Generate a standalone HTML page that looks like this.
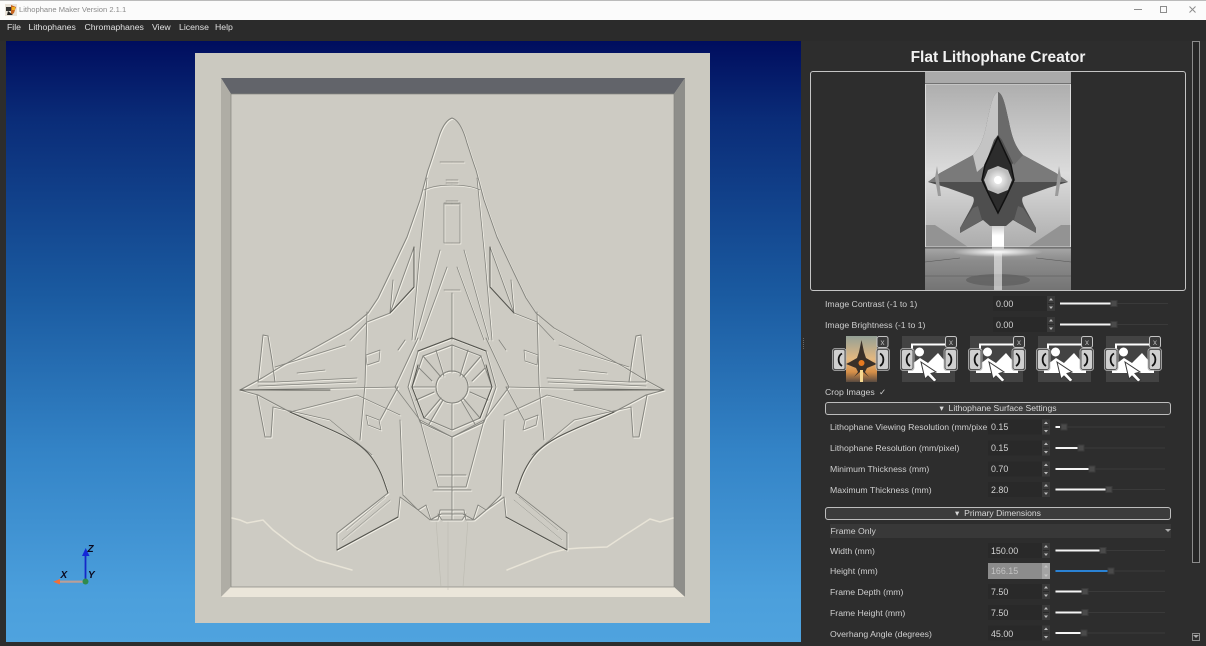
<!DOCTYPE html>
<html><head><meta charset="utf-8">
<style>
html,body{margin:0;padding:0;background:#2d2d2d}
#w{position:relative;width:1206px;height:646px;overflow:hidden;background:#2d2d2d;font-family:"Liberation Sans",sans-serif;color:#d8d8d8}
#w div,#w span{position:absolute;white-space:nowrap}
.m{top:21px;font-size:8.7px;line-height:13px;color:#e0e0e0}
.l{font-size:8.7px;line-height:12px;color:#cfcfcf}
.v{font-size:8.9px;line-height:12px;color:#d4d4d4}
.b{left:825px;width:344px;height:11px;border:1px solid #bdbdbd;border-radius:3px;background:#3c3c3c;font-size:8.6px;line-height:11px;text-align:center;color:#d8d8d8}
</style></head><body>
<div id="w">
<div style="left:0;top:0;width:1206px;height:19.500px;background:#fbfbfb;border-top:1px solid #bbb;box-sizing:border-box"></div>
<div style="left:19px;top:3.500px;font-size:7.6px;line-height:12px;color:#8a8a8a">Lithophane Maker Version 2.1.1</div>
<svg style="position:absolute;left:5px;top:4px" width="12" height="12" viewBox="0 0 12 12"><rect width="12" height="12" fill="#e8e2d8"/><path d="M1 3h5v4H1z" fill="#333"/><path d="M6 1l5 2-2 6-3 2z" fill="#c8641e"/><path d="M3 7l5 4H2z" fill="#222"/><path d="M7 3h3v3H7z" fill="#eeb020"/></svg>
<svg style="position:absolute;left:1125px;top:0" width="81" height="19" viewBox="0 0 81 19" fill="none" stroke="#8c8c8c"><path d="M9 9.500h8"/><rect x="35.500" y="6.500" width="6" height="6"/><path d="M64.500 6.500l6 6M70.500 6.500l-6 6"/></svg>
<div style="left:0;top:19.500px;width:1206px;height:21px;background:#2b2b2b"></div>
<span class="m" style="left:7px">File</span>
<span class="m" style="left:28.500px">Lithophanes</span>
<span class="m" style="left:84.500px">Chromaphanes</span>
<span class="m" style="left:152px">View</span>
<span class="m" style="left:179px">License</span>
<span class="m" style="left:215px">Help</span>

<div style="left:6px;top:41px;width:795px;height:601px;background:linear-gradient(180deg,#000d5e 0%,#0a2c78 13%,#1a5aa0 42%,#3383c6 68%,#4b9fdc 92%,#4fa3de 100%)"></div>

<svg style="position:absolute;left:0;top:0" width="802" height="646" viewBox="0 0 802 646">
<defs>
<g id="ship" fill="none" stroke-linejoin="round" stroke-linecap="round">
<path d="M452 118C446 120 441 128 437 143C433 155 431 162 428 170L420 200L407 237L390 273L378 298L368 313L350 328L280 367L262 378L240 390L258 395L290 412C330 430 358 438 372 458C382 472 384 482 388 493L337 533L337 550L398 517L400 497L418 510L430 520L441 514L452 514" stroke-width="1"/>
<path d="M263 335L258 382L275 382L272 360L268 336Z M257 395L265 437L271 437L273 407" stroke-width="1"/>
<path d="M240 390L398 387M258 386L356 382M275 382L357 378M275 367L345 345M290 412L357 395L400 415M273 407L330 420L372 455" stroke-width=".8"/>
<path d="M427 178L419 260L412 340M440 162H452M446 180H452M446 183H452M446 201H452M445 204H452M424 190C432 186 442 185 452 185" stroke-width=".8"/>
<path d="M444 203V243H452M444 203H452M440 250L415 340M447 267L420 340M444 290H452M452 293V340" stroke-width=".8"/>
<path d="M414 247V287L390 313ZM393 280L390 313M367 312L365 384L360 440M350 340L367 322L390 313" stroke-width=".9"/>
<path d="M418 338L395 387L420 420L438 487H452M405 340L398 350M380 420L398 387M420 420L452 437M400 420L403 495" stroke-width=".9"/>
<path d="M452 437V520M438 475H452M433 490H452M403 495L418 510L426 505L431 520L438 520L440 510L452 510M438 514L442 520H452" stroke-width=".9"/>
<path d="M366 355L380 350L379 361L367 365ZM366 415L379 420L381 430L368 425ZM297 373L325 370" stroke-width=".7"/>
<path d="M342 540L390 500M346 530L385 497" stroke-width=".5"/>
<path d="M452 338L418 351L408 387L420 422L452 437M452 345L423 356L412 387L424 418L452 430" stroke-width="1"/>
<path d="M452 345V372M423 356L441 377M412 387H435M424 418L441 398M452 430V404M419 368L432 381M416 400L434 392M436 350L444 376M429 424L443 400" stroke-width="1"/>
<circle cx="452" cy="387" r="16" stroke-width="1"/>
</g>
<g id="dk" fill="none" stroke-linecap="round" stroke-linejoin="round">
<path d="M290 412C330 430 358 438 372 458C382 472 384 482 388 493M337 550L398 517M414 247V287L390 313M240 390H330M452 338L418 351M418 365L412 387L424 418" stroke-width="1"/>
</g>
</defs>
<rect x="195" y="53" width="515" height="570" fill="#cbc9c0"/>
<rect x="221" y="78" width="464" height="519" fill="#cdcbc2"/>
<path d="M221 78H685L674 94H231Z" fill="#62646a"/>
<path d="M221 78L231 94V587L221 597Z" fill="#afada5"/>
<path d="M685 78L674 94V587L685 597Z" fill="#8e8e8a"/>
<path d="M221 597L231 587H674L685 597Z" fill="#ebe6da"/>
<rect x="231" y="94" width="443" height="493" fill="#cdcbc3" stroke="#85857f" stroke-width=".7"/>
<g stroke="#e9e5d8" fill="none" stroke-width="1.500" stroke-linecap="round">
<path d="M232 518L240 520L247 523L263 520L273 530L295 547L317 560L352 570" opacity=".95"/>
<path d="M673 518L660 522L650 519L625 535L607 547L580 548L567 549L550 553L507 570" opacity=".95"/>
</g>
<g stroke="#b5b3aa" stroke-width=".6" fill="none" opacity=".7"><path d="M436 520L441 587M468 520L463 587M448 520V590"/></g>
<g style="filter:blur(.35px)">
<g stroke="#f3f1e8" transform="translate(.9 1)"><use href="#ship"/><use href="#ship" transform="translate(904 0) scale(-1 1)"/></g>
<g stroke="#85857f"><use href="#ship"/><use href="#ship" transform="translate(904 0) scale(-1 1)"/></g>
<g stroke="#55554f"><use href="#dk"/><use href="#dk" transform="translate(904 0) scale(-1 1)"/></g>
</g>
<path d="M85.500 581V552" stroke="#1428c8" stroke-width="1.800"/><path d="M85.700 548L82 556H89.500Z" fill="#1428d8"/>
<path d="M85 581.700H58" stroke="#bb9f98" stroke-width="2.200"/><path d="M53 581.700L60 579V584.500Z" fill="#f0703a"/>
<circle cx="85.500" cy="581.500" r="3" fill="#2e8a4e"/>
<text x="87.500" y="552" font-family="Liberation Sans,sans-serif" font-size="10" font-weight="bold" font-style="italic" fill="#0a0a20">Z</text>
<text x="60.500" y="578" font-family="Liberation Sans,sans-serif" font-size="10" font-weight="bold" font-style="italic" fill="#0a0a20">X</text>
<text x="88" y="578" font-family="Liberation Sans,sans-serif" font-size="10" font-weight="bold" font-style="italic" fill="#0a0a20">Y</text>
</svg>

<svg style="position:absolute;left:802px;top:338px" width="4" height="12"><path d="M1.500 0v12" stroke="#666" stroke-width="1" stroke-dasharray="1 1"/></svg>

<div style="left:811px;top:49px;width:374px;text-align:center;font-size:15.500px;line-height:18px;font-weight:bold;color:#f2f2f2">Flat Lithophane Creator</div>
<div style="left:810px;top:71px;width:374px;height:218px;border:1px solid #c4c4c4;border-radius:3px"></div>

<svg style="position:absolute;left:925px;top:72px" width="146" height="218" viewBox="925 72 146 218">
<defs>
<linearGradient id="sky" x1="0" y1="0" x2="0" y2="1"><stop offset="0" stop-color="#aeaeae"/><stop offset=".55" stop-color="#dcdcdc"/><stop offset="1" stop-color="#acacac"/></linearGradient>
<linearGradient id="gr" x1="0" y1="0" x2="0" y2="1"><stop offset="0" stop-color="#a6a6a6"/><stop offset=".3" stop-color="#8c8c8c"/><stop offset="1" stop-color="#747474"/></linearGradient>
<linearGradient id="ex" x1="0" y1="0" x2="0" y2="1"><stop offset="0" stop-color="#bbb"/><stop offset=".5" stop-color="#fff"/><stop offset="1" stop-color="#fff"/></linearGradient>
<radialGradient id="gl"><stop offset="0" stop-color="#fff"/><stop offset="1" stop-color="#fff" stop-opacity="0"/></radialGradient>
<g id="ph">
<path d="M998 92C993 94 991 104 987 122C984 138 980 148 973 155L940 173L928 182L948 188L973 197C975 200 973 204 971 208L960 228V233L983 220L990 226H998Z" fill="#4e4e4e"/>
<path d="M973 155L940 173L928 182H982L985 165Z" fill="#7a7a7a"/>
<path d="M998 137L985 165L982 180L990 197L998 213Z" fill="#2c2c2c"/>
<path d="M937 166L935 178L938 196L941 196L939 180Z" fill="#9a9a9a"/>
<path d="M973 208L960 228V233L982 220L978 206Z" fill="#636363"/>
</g>
</defs>
<rect x="925" y="72" width="146" height="12" fill="#aaa"/>
<rect x="925" y="84" width="146" height="163" fill="url(#sky)"/>
<path d="M925 225L935 225L950 235L968 247H925Z" fill="#939393"/>
<path d="M1071 225L1061 225L1046 235L1028 247H1071Z" fill="#939393"/>
<rect x="925" y="248" width="146" height="42" fill="url(#gr)"/>
<ellipse cx="998" cy="252" rx="45" ry="5" fill="url(#gl)"/>
<rect x="992" y="222" width="12" height="27" fill="url(#ex)"/>
<path d="M925 262L960 258M1071 262L1036 258M925 276H1071" stroke="#555" stroke-width=".6"/>
<ellipse cx="998" cy="280" rx="32" ry="6" fill="#5c5c5c" opacity=".7"/>
<rect x="994" y="253" width="8" height="37" fill="#f2f2f2" opacity=".6"/>
<use href="#ph"/><use href="#ph" transform="translate(1996 0) scale(-1 1)"/>
<path d="M998 92C993 94 991 104 987 122C984 138 980 148 973 155L977 172L985 165L994 140L998 135Z" fill="#c4c4c4"/>
<path d="M998 92C1003 94 1005 104 1009 122C1012 138 1016 148 1023 155L1014 165L1002 140L998 135Z" fill="#6a6a6a"/>
<path d="M998 137L985 165L982 180L990 197L998 213L1006 197L1014 180L1011 165Z" fill="none" stroke="#111" stroke-width="1.500"/>
<path d="M998 166L1008 170L1012 180L1008 190L998 194L988 190L984 180L988 170Z" fill="#bdbdbd"/>
<circle cx="998" cy="180" r="11" fill="url(#gl)"/><circle cx="998" cy="180" r="4" fill="#fff"/>
<rect x="925.500" y="84" width="145" height="163" fill="none" stroke="#e8e8e8" stroke-width=".8"/>
<path d="M925 83.500H1071M925 248H1071" stroke="#222" stroke-width=".6"/>
</svg>

<span class="l" style="left:825px;top:297.500px">Image Contrast (-1 to 1)</span>
<span class="l" style="left:825px;top:318.500px">Image Brightness (-1 to 1)</span>
<span class="l" style="left:825px;top:386px">Crop Images</span>
<span class="l" style="left:879px;top:386px">✓</span>

<div class="b" style="top:402px">▾ &nbsp;Lithophane Surface Settings</div>
<div class="b" style="top:507px;">▾ &nbsp;Primary Dimensions</div>
<div style="left:830px;top:524px;width:341px;height:14px;background:#383838"></div>
<span class="l" style="left:830.500px;top:525px">Frame Only</span>
<svg style="position:absolute;left:1165px;top:529px" width="6" height="4"><path d="M0 0h6L3 3z" fill="#aaa"/></svg>

<span class="l" style="left:830px;top:421px">Lithophane Viewing Resolution (mm/pixe</span>
<span class="l" style="left:830px;top:442px">Lithophane Resolution (mm/pixel)</span>
<span class="l" style="left:830px;top:463px">Minimum Thickness (mm)</span>
<span class="l" style="left:830px;top:484px">Maximum Thickness (mm)</span>
<span class="l" style="left:830px;top:544.500px">Width (mm)</span>
<span class="l" style="left:830px;top:565px">Height (mm)</span>
<span class="l" style="left:830px;top:586px">Frame Depth (mm)</span>
<span class="l" style="left:830px;top:606.500px">Frame Height (mm)</span>
<span class="l" style="left:830px;top:627.500px">Overhang Angle (degrees)</span>

<svg style="position:absolute;left:825px;top:295px" width="370" height="351" viewBox="825 295 370 351">
<defs>
<g id="sp"><rect x="0" y="-7.500" width="55" height="15" fill="#292929"/><rect x="54" y="-7.500" width="8" height="15" fill="#3a3a3a"/><path d="M58 -5.500l-2 2.500h4zM58 5.500l-2-2.500h4z" fill="#bbb"/><path d="M55 0h6" stroke="#2a2a2a"/></g>
<g id="th">
<rect x="902" y="336" width="53" height="46" fill="#434343"/>
<path d="M912 352V344.500H945.500" fill="none" stroke="#fff" stroke-width="2"/>
<circle cx="919.500" cy="352" r="4.500" fill="#fff"/>
<path d="M908 373V367L920 358L928 363L938 353L950 367V373Z" fill="#fff"/>
<path d="M921 362L936 372L931 373.500L937 380L934 382L928 376L925 379Z" fill="#fff" stroke="#3a3a3a" stroke-width="1"/>
<rect x="945.500" y="336.500" width="11" height="11" rx="2" fill="#3a3a3a" stroke="#c4c4c4"/>
<rect x="901.500" y="349.500" width="11.500" height="20" rx="2" fill="#cfcfcf" stroke="#555"/><rect x="900.500" y="348.500" width="13.500" height="22" rx="2.500" fill="none" stroke="#bbb" stroke-width=".8"/>
<path d="M910 353.500C905.500 356 905.500 363 910 366" fill="none" stroke="#111" stroke-width="1.800"/>
<rect x="945" y="349.500" width="11.500" height="20" rx="2" fill="#cfcfcf" stroke="#555"/><rect x="944" y="348.500" width="13.500" height="22" rx="2.500" fill="none" stroke="#bbb" stroke-width=".8"/>
<path d="M948 353.500C952.500 356 952.500 363 948 366" fill="none" stroke="#111" stroke-width="1.800"/>
</g>
<linearGradient id="t1" x1="0" y1="0" x2="0" y2="1"><stop offset="0" stop-color="#94a096"/><stop offset=".5" stop-color="#e4b880"/><stop offset=".78" stop-color="#d89048"/><stop offset="1" stop-color="#5a4a40"/></linearGradient>
</defs>
<use href="#sp" x="993" y="303.500"/><use href="#sp" x="993" y="324.500"/>
<g stroke="#3a3a3a"><path d="M1060 303.500H1168M1060 324.500H1168M1055 427H1165M1055 448H1165M1055 469H1165M1055 489.500H1165M1055 550.500H1165M1055 571H1165M1055 591.500H1165M1055 612.500H1165M1055 633H1165"/></g>
<g stroke="#f4f4f4" stroke-width="2"><path d="M1060 303.500H1112M1060 324.500H1112M1055.500 427H1060M1055.500 448H1078M1055.500 469H1089M1055.500 489.500H1106M1055.500 550.500H1100M1055.500 591.500H1082M1055.500 612.500H1082M1055.500 633H1081"/></g>
<path d="M1055.500 571H1108" stroke="#2a82d4" stroke-width="2"/>
<g fill="#4a4a4a" stroke="#3a3a3a"><rect x="1111" y="300.500" width="6" height="6"/><rect x="1111" y="321.500" width="6" height="6"/><rect x="1061" y="424" width="6" height="6"/><rect x="1078" y="445" width="6" height="6"/><rect x="1089" y="466" width="6" height="6"/><rect x="1106" y="486.500" width="6" height="6"/><rect x="1100" y="547.500" width="6" height="6"/><rect x="1108" y="568" width="6" height="6"/><rect x="1082" y="588.500" width="6" height="6"/><rect x="1082" y="609.500" width="6" height="6"/><rect x="1081" y="630" width="6" height="6"/></g>
<use href="#sp" x="988" y="427"/><use href="#sp" x="988" y="448"/><use href="#sp" x="988" y="469"/><use href="#sp" x="988" y="489.500"/>
<use href="#sp" x="988" y="550.500"/><use href="#sp" x="988" y="591.500"/><use href="#sp" x="988" y="612.500"/><use href="#sp" x="988" y="633"/>
<rect x="988" y="563" width="55" height="16" fill="#8c8c8c"/><rect x="1042" y="563" width="8" height="16" fill="#a4a4a4"/><path d="M1046 565l-2 2.500h4zM1046 577l-2-2.500h4z" fill="#c4c4c4"/>
<rect x="846" y="336" width="31" height="46" fill="url(#t1)"/>
<path d="M861.500 340L859 352L857 358L850 362L846 364L856 368L858 372L854 377L860 372H863L869 377L865 372L867 368L877 364L873 362L866 358L864 352Z" fill="#3a3028"/>
<circle cx="861.500" cy="363" r="3" fill="#e87a20"/>
<rect x="860" y="370" width="3" height="12" fill="#f6d890"/>
<rect x="877" y="336.500" width="11" height="11" rx="2" fill="#3a3a3a" stroke="#c4c4c4"/>
<rect x="833.500" y="349.500" width="11.500" height="20" rx="2" fill="#cfcfcf" stroke="#555"/><rect x="832.500" y="348.500" width="13.500" height="22" rx="2.500" fill="none" stroke="#bbb" stroke-width=".8"/>
<path d="M842 353.500C837.500 356 837.500 363 842 366" fill="none" stroke="#111" stroke-width="1.800"/>
<rect x="877" y="349.500" width="11.500" height="20" rx="2" fill="#cfcfcf" stroke="#555"/><rect x="876" y="348.500" width="13.500" height="22" rx="2.500" fill="none" stroke="#bbb" stroke-width=".8"/>
<path d="M880 353.500C884.500 356 884.500 363 880 366" fill="none" stroke="#111" stroke-width="1.800"/>
<use href="#th"/><use href="#th" x="68"/><use href="#th" x="136"/><use href="#th" x="204"/>
<g font-family="Liberation Sans,sans-serif" font-size="8" fill="#bbb" text-anchor="middle"><text x="882.500" y="345">x</text><text x="951" y="345">x</text><text x="1019" y="345">x</text><text x="1087" y="345">x</text><text x="1155" y="345">x</text></g>
</svg>

<span class="v" style="left:996px;top:297.500px">0.00</span>
<span class="v" style="left:996px;top:318.500px">0.00</span>
<span class="v" style="left:991px;top:421px">0.15</span>
<span class="v" style="left:991px;top:442px">0.15</span>
<span class="v" style="left:991px;top:463px">0.70</span>
<span class="v" style="left:991px;top:484px">2.80</span>
<span class="v" style="left:991px;top:544.500px">150.00</span>
<span class="v" style="left:991px;top:565px;color:#c4c4c4">166.15</span>
<span class="v" style="left:991px;top:586px">7.50</span>
<span class="v" style="left:991px;top:606.500px">7.50</span>
<span class="v" style="left:991px;top:627.500px">45.00</span>

<div style="left:1192px;top:41px;width:6px;height:520px;border:1px solid #8c8c8c;background:#262626"></div>
<div style="left:1192px;top:633px;width:6px;height:6px;border:1px solid #8c8c8c"></div>
<svg style="position:absolute;left:1193px;top:635px" width="6" height="4"><path d="M0 0h6L3 3z" fill="#aaa"/></svg>
</div>
</body></html>
